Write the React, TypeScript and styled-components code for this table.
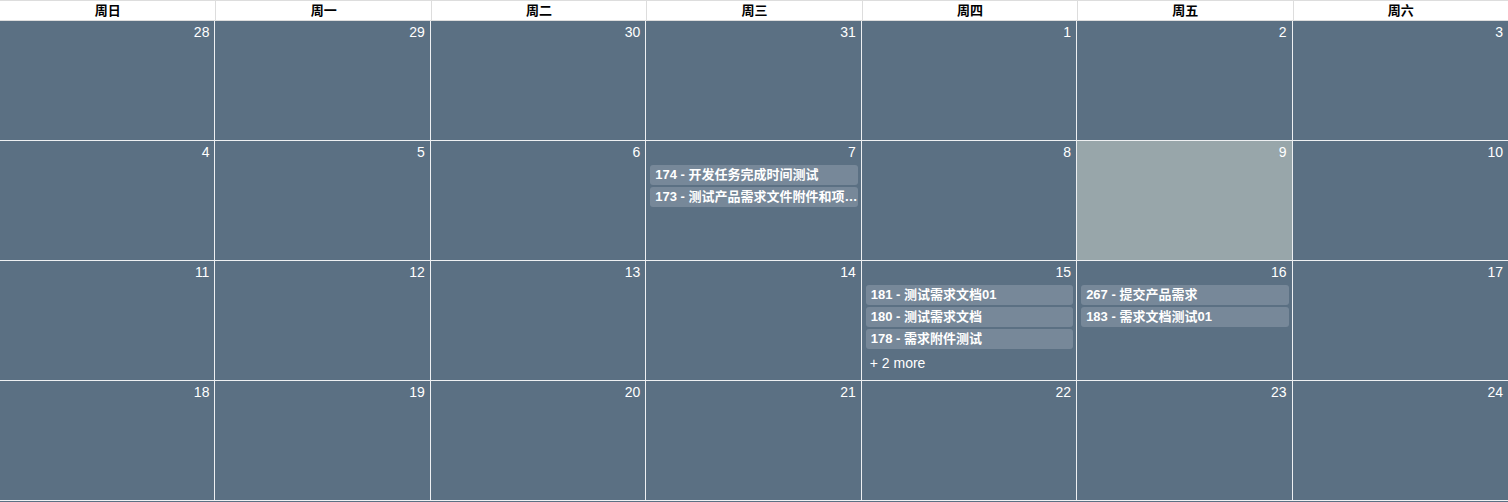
import React from "react";
import styled, { createGlobalStyle } from "styled-components";

const Global = createGlobalStyle`
  html, body { margin: 0; padding: 0; background: #5b7083; }
  body { font-family: "Liberation Sans", Arial, "Noto Sans CJK SC", sans-serif; }
  * { box-sizing: border-box; }
`;

const Calendar = styled.div`
  width: 1508px;
  display: flex;
  flex-direction: column;
`;

const HeaderRow = styled.div`
  display: grid;
  grid-template-columns: repeat(7, 1fr);
  background: #fff;
  border-top: 1px solid #ddd;
  border-bottom: 1px solid #ddd;
`;

const HeaderCell = styled.div<{ $first?: boolean }>`
  height: 19px;
  line-height: 19px;
  text-align: center;
  font-size: 13px;
  font-weight: bold;
  color: #000;
  border-left: ${(p) => (p.$first ? "none" : "1px solid #ddd")};
`;

const WeekRow = styled.div`
  display: grid;
  grid-template-columns: repeat(7, 1fr);
  height: 120px;
  border-bottom: 1px solid #eef0f2;
`;

const DayCell = styled.div<{ $today?: boolean; $last?: boolean }>`
  background: ${(p) => (p.$today ? "#98a6aa" : "#5b7083")};
  border-right: ${(p) => (p.$last ? "none" : "1px solid #eef0f2")};
  display: flex;
  flex-direction: column;
  min-width: 0;
  overflow: hidden;
`;

const DayNumber = styled.div`
  color: #fff;
  font-size: 14px;
  line-height: 20px;
  text-align: right;
  padding: 1px 5px 0 0;
  height: 22px;
`;

const EventList = styled.div`
  display: flex;
  flex-direction: column;
  gap: 2px;
  padding: 2px 3px 0 4px;
`;

const EventBar = styled.div`
  background: #778899;
  border-radius: 3px;
  height: 20px;
  line-height: 20px;
  padding: 0 0 0 5px;
  color: #fff;
  font-size: 13px;
  font-weight: bold;
  white-space: nowrap;
  overflow: hidden;
  text-overflow: ellipsis;
`;

const MoreLink = styled.div`
  color: #fff;
  font-size: 14px;
  line-height: 20px;
  padding: 4px 8px 0;
`;

const headers = ["周日", "周一", "周二", "周三", "周四", "周五", "周六"];

type Ev = { id: number; title: string };
type Day = { n: number; today?: boolean; events?: Ev[]; more?: number };

const weeks: Day[][] = [
  [28, 29, 30, 31, 1, 2, 3].map((n) => ({ n })),
  [
    { n: 4 },
    { n: 5 },
    { n: 6 },
    {
      n: 7,
      events: [
        { id: 174, title: "开发任务完成时间测试" },
        { id: 173, title: "测试产品需求文件附件和项目关联测试" },
      ],
    },
    { n: 8 },
    { n: 9, today: true },
    { n: 10 },
  ],
  [
    { n: 11 },
    { n: 12 },
    { n: 13 },
    { n: 14 },
    {
      n: 15,
      events: [
        { id: 181, title: "测试需求文档01" },
        { id: 180, title: "测试需求文档" },
        { id: 178, title: "需求附件测试" },
      ],
      more: 2,
    },
    {
      n: 16,
      events: [
        { id: 267, title: "提交产品需求" },
        { id: 183, title: "需求文档测试01" },
      ],
    },
    { n: 17 },
  ],
  [18, 19, 20, 21, 22, 23, 24].map((n) => ({ n })),
];

export default function App() {
  return (
    <>
      <Global />
      <Calendar>
        <HeaderRow>
          {headers.map((h, i) => (
            <HeaderCell key={h} $first={i === 0}>
              {h}
            </HeaderCell>
          ))}
        </HeaderRow>
        {weeks.map((week, wi) => (
          <WeekRow key={wi}>
            {week.map((d, di) => (
              <DayCell key={di} $today={d.today} $last={di === 6}>
                <DayNumber>{d.n}</DayNumber>
                {d.events && (
                  <EventList>
                    {d.events.map((e) => (
                      <EventBar key={e.id}>
                        {e.id} - {e.title}
                      </EventBar>
                    ))}
                  </EventList>
                )}
                {d.more ? <MoreLink>+ {d.more} more</MoreLink> : null}
              </DayCell>
            ))}
          </WeekRow>
        ))}
      </Calendar>
    </>
  );
}
